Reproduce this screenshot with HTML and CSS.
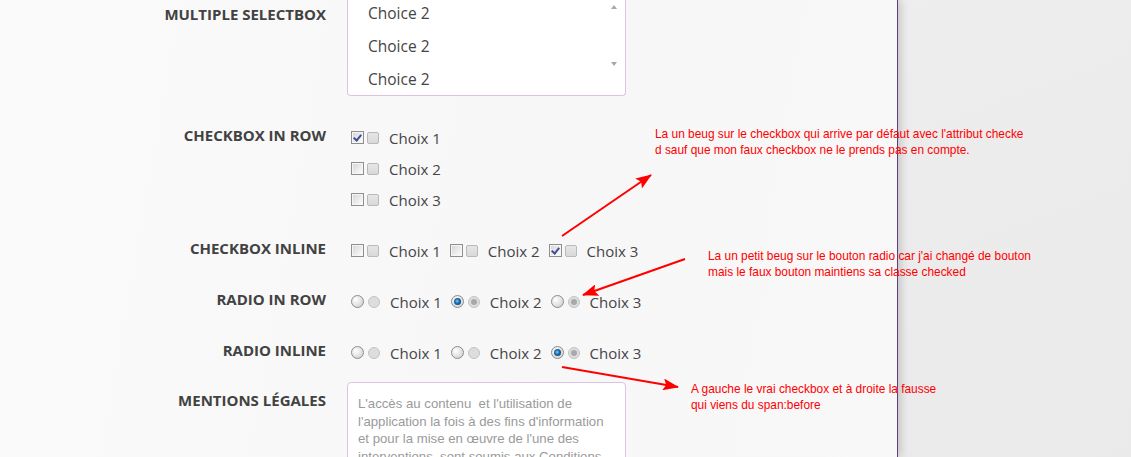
FILE: index.html
```html
<!DOCTYPE html>
<html lang="fr">
<head>
<meta charset="utf-8">
<title>Formulaire</title>
<link rel="stylesheet" href="styles.css">
</head>
<body>
<div class="page">
  <div class="panel">
    <form class="form">
      <div class="group g-select">
        <div class="label">MULTIPLE SELECTBOX</div>
        <div class="select">
          <div class="options">
            <div class="option">Choice 2</div>
            <div class="option">Choice 2</div>
            <div class="option">Choice 2</div>
          </div>
          <span class="arrow-up"></span>
          <span class="arrow-down"></span>
        </div>
      </div>

      <div class="group g-first">
        <div class="label">CHECKBOX IN ROW</div>
        <div class="controls col">
          <div class="item"><span class="cb checked"></span><span class="fcb"></span><span class="txt">Choix 1</span></div>
          <div class="item"><span class="cb"></span><span class="fcb"></span><span class="txt">Choix 2</span></div>
          <div class="item"><span class="cb"></span><span class="fcb"></span><span class="txt">Choix 3</span></div>
        </div>
      </div>

      <div class="group">
        <div class="label">CHECKBOX INLINE</div>
        <div class="controls row">
          <div class="item"><span class="cb"></span><span class="fcb"></span><span class="txt">Choix 1</span></div>
          <div class="item"><span class="cb"></span><span class="fcb"></span><span class="txt">Choix 2</span></div>
          <div class="item"><span class="cb checked"></span><span class="fcb"></span><span class="txt">Choix 3</span></div>
        </div>
      </div>

      <div class="group">
        <div class="label">RADIO IN ROW</div>
        <div class="controls row">
          <div class="item"><span class="rd"></span><span class="frd"></span><span class="txt">Choix 1</span></div>
          <div class="item"><span class="rd checked"></span><span class="frd checked"></span><span class="txt">Choix 2</span></div>
          <div class="item"><span class="rd"></span><span class="frd checked"></span><span class="txt">Choix 3</span></div>
        </div>
      </div>

      <div class="group">
        <div class="label">RADIO INLINE</div>
        <div class="controls row">
          <div class="item"><span class="rd"></span><span class="frd"></span><span class="txt">Choix 1</span></div>
          <div class="item"><span class="rd"></span><span class="frd"></span><span class="txt">Choix 2</span></div>
          <div class="item"><span class="rd checked"></span><span class="frd checked"></span><span class="txt">Choix 3</span></div>
        </div>
      </div>

      <div class="group g-text">
        <div class="label lbl-text">MENTIONS LÉGALES</div>
        <div class="textarea">L'accès au contenu&nbsp; et l'utilisation de<br>l'application la fois à des fins d'information<br>et pour la mise en œuvre de l'une des<br>interventions, sont soumis aux Conditions</div>
      </div>
    </form>
  </div>

  <div class="note note1">La un beug sur le checkbox qui arrive par défaut avec l'attribut checke<br>d sauf que mon faux checkbox ne le prends pas en compte.</div>
  <div class="note note2">La un petit beug sur le bouton radio car j'ai changé de bouton<br>mais le faux bouton maintiens sa classe checked</div>
  <div class="note note3">A gauche le vrai checkbox et à droite la fausse<br>qui viens du span:before</div>

  <svg class="arrows" width="1131" height="457" viewBox="0 0 1131 457">
    <defs>
      <marker id="head" markerUnits="userSpaceOnUse" markerWidth="16" markerHeight="12" refX="15" refY="6" orient="auto">
        <path d="M0,0 L16,6 L0,12 L3,6 z" fill="#ff0000"/>
      </marker>
    </defs>
    <line x1="562" y1="236" x2="651" y2="175" stroke="#ff0000" stroke-width="2" marker-end="url(#head)"/>
    <line x1="685" y1="259" x2="583" y2="295" stroke="#ff0000" stroke-width="2" marker-end="url(#head)"/>
    <line x1="562" y1="367" x2="678" y2="387" stroke="#ff0000" stroke-width="2" marker-end="url(#head)"/>
  </svg>
</div>
</body>
</html>
```

FILE: styles.css
```css
html, body {
  margin: 0;
  padding: 0;
}
body {
  width: 1131px;
  height: 457px;
  overflow: hidden;
  background: #ececec;
}
.page {
  position: relative;
  width: 1131px;
  height: 457px;
  overflow: hidden;
  background: linear-gradient(160deg, #f2f2f2 0%, #ededed 40%, #eaeaea 100%);
}
.panel {
  width: 897px;
  height: 457px;
  border-right: 1px solid #5e3f7b;
  box-shadow: 2px 0 9px rgba(0, 0, 0, 0.2);
  background: linear-gradient(100deg, #fafafa 0%, #f7f7f7 60%, #f8f8f8 100%);
  overflow: hidden;
}
.form {
  display: flex;
  flex-direction: column;
}
.group {
  display: flex;
  gap: 21px;
  margin-top: 20px;
}
.g-select { margin-top: 0; }
.g-first { margin-top: 26px; }
.g-text { margin-top: 14px; }
.label {
  width: 326px;
  flex: none;
  text-align: right;
  font-family: "Open Sans", "Liberation Sans", sans-serif;
  font-weight: 700;
  font-size: 15px;
  line-height: 20px;
  color: #424242;
  padding-top: 3px;
}
.g-select .label { padding-top: 4px; }
.lbl-text { padding-top: 8px; }

/* select */
.select {
  position: relative;
  width: 277px;
  height: 95px;
  border: 1px solid #dcc3e3;
  border-top: 0;
  border-radius: 0 0 4px 4px;
  background: #ffffff;
  overflow: hidden;
}
.options {
  margin-top: -3px;
}
.option {
  height: 33px;
  line-height: 33px;
  padding-left: 20px;
  font-family: "Open Sans", "Liberation Sans", sans-serif;
  font-size: 15.5px;
  color: #444444;
}
.arrow-up, .arrow-down {
  position: absolute;
  right: 8px;
  width: 0;
  height: 0;
  border-left: 3px solid transparent;
  border-right: 3px solid transparent;
}
.arrow-up {
  top: 5px;
  border-bottom: 4px solid #a8a8a8;
}
.arrow-down {
  top: 62px;
  border-top: 4px solid #a8a8a8;
}

/* controls */
.controls {
  display: flex;
  padding-left: 4px;
}
.controls.col { flex-direction: column; }
.controls.row { flex-direction: row; gap: 9px; }
.item {
  height: 31px;
  display: flex;
  align-items: center;
}
.txt {
  font-family: "Open Sans", "Liberation Sans", sans-serif;
  font-size: 15px;
  color: #454548;
  margin-left: 10px;
  line-height: 20px;
}

.cb {
  width: 13px;
  height: 13px;
  box-sizing: border-box;
  border: 1px solid #8f8f8f;
  background: linear-gradient(135deg, #d4d4d4 0%, #f2f2f2 70%, #ffffff 100%);
  box-shadow: inset 0 0 0 1px #f5f5f5;
  position: relative;
}
.cb.checked::after {
  content: "";
  position: absolute;
  left: 3px;
  top: 1px;
  width: 3px;
  height: 6px;
  border-right: 2px solid #3f4f8f;
  border-bottom: 2px solid #3f4f8f;
  transform: rotate(40deg);
}
.fcb {
  width: 12px;
  height: 12px;
  box-sizing: border-box;
  margin-left: 3px;
  border: 1px solid #b9b9b9;
  border-radius: 2px;
  background: linear-gradient(#e6e6e6, #d9d9d9);
}

.rd {
  width: 13px;
  height: 13px;
  box-sizing: border-box;
  border-radius: 50%;
  border: 1px solid #8c8c8c;
  background: radial-gradient(circle at 35% 35%, #ffffff 0%, #e4e4e4 50%, #c8c8c8 100%);
  position: relative;
}
.rd.checked::after {
  content: "";
  position: absolute;
  left: 2px;
  top: 2px;
  width: 7px;
  height: 7px;
  border-radius: 50%;
  background: radial-gradient(circle at 45% 45%, #7fd0ff 0%, #1b6fb5 40%, #0b2448 100%);
}
.frd {
  width: 12px;
  height: 12px;
  box-sizing: border-box;
  margin-left: 4px;
  border-radius: 50%;
  border: 1px solid #c4c4c4;
  background: #dddddd;
  position: relative;
}
.frd.checked::after {
  content: "";
  position: absolute;
  left: 2px;
  top: 2px;
  width: 6px;
  height: 6px;
  border-radius: 50%;
  background: #a9a9a9;
}

/* textarea */
.textarea {
  width: 267px;
  height: 120px;
  flex: none;
  border: 1px solid #dcc3e3;
  border-radius: 4px 4px 0 0;
  background: #ffffff;
  padding: 12px 0 0 10px;
  font-family: "Liberation Sans", Arial, sans-serif;
  font-size: 13.2px;
  line-height: 17.5px;
  color: #9a9a9a;
  white-space: nowrap;
}

/* annotations */
.note {
  position: absolute;
  font-family: "Liberation Sans", Arial, sans-serif;
  font-size: 11.9px;
  line-height: 16px;
  color: #ff0000;
  white-space: nowrap;
}
.note1 { left: 655px; top: 126px; }
.note2 { left: 708px; top: 248px; }
.note3 { left: 691px; top: 381px; }
.arrows {
  position: absolute;
  left: 0;
  top: 0;
  pointer-events: none;
}
```
